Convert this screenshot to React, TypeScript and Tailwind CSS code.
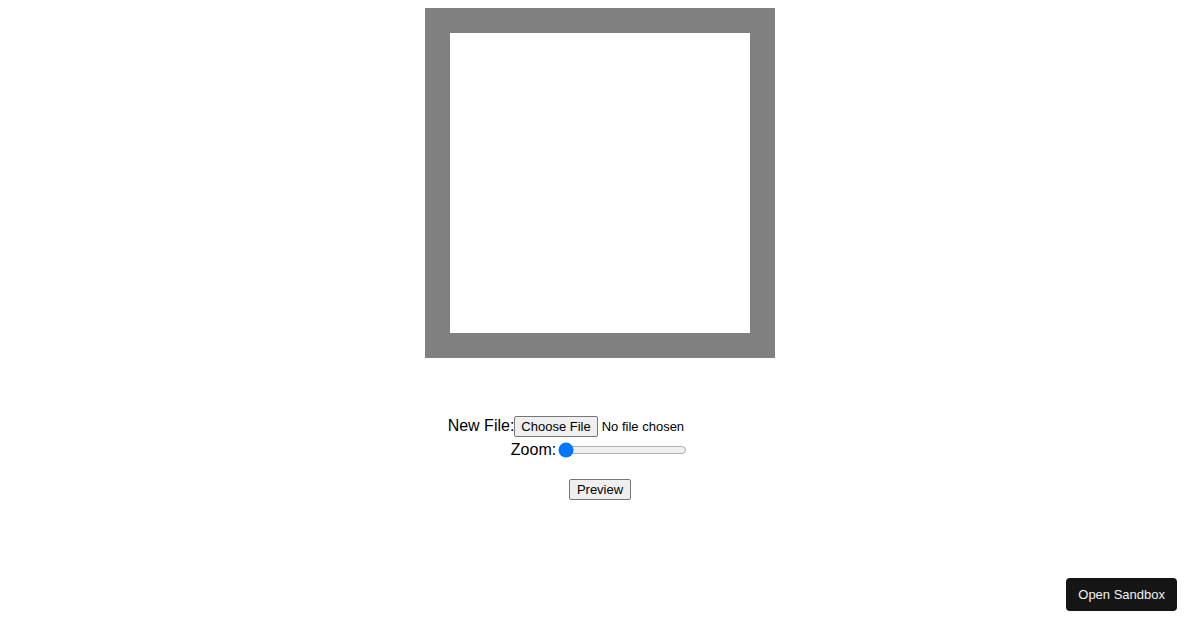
export default function App() {
  return (
    <div className="relative h-[630px] w-[1200px] bg-white pt-2 font-['Liberation_Sans',Arial,sans-serif] text-black">
      <div className="flex flex-col items-center">
        {/* canvas frame */}
        <div className="h-[350px] w-[350px] bg-[#808080] p-[25px]">
          <div className="h-full w-full bg-white" />
        </div>

        <div className="mt-[56px] flex h-[24px] items-center text-[16px]">
          <label htmlFor="file">New File:</label>
          <input
            id="file"
            type="file"
            className="w-[238px] text-[13px] leading-[17px] file:mr-[4px] file:rounded-[2px] file:border file:border-[#767676] file:bg-[#efefef] file:px-[6px] file:py-[1px] file:text-[13px] file:leading-[17px] file:text-black"
          />
        </div>
        <div className="flex h-[24px] items-center text-[16px]">
          <label htmlFor="zoom">Zoom:</label>
          <input id="zoom" type="range" min={0} max={100} defaultValue={0} className="mx-[2px] w-[129px]" />
        </div>
        <button className="mt-[17px] rounded-[2px] border border-[#767676] bg-[#efefef] px-[7px] py-[1px] text-[13px] leading-[17px]">
          Preview
        </button>
      </div>

      <button className="absolute bottom-[19px] right-[23px] h-[33px] rounded-[4px] bg-[#151515] px-[12px] text-[13px] text-[#f2f2f2]">
        Open Sandbox
      </button>
    </div>
  )
}
